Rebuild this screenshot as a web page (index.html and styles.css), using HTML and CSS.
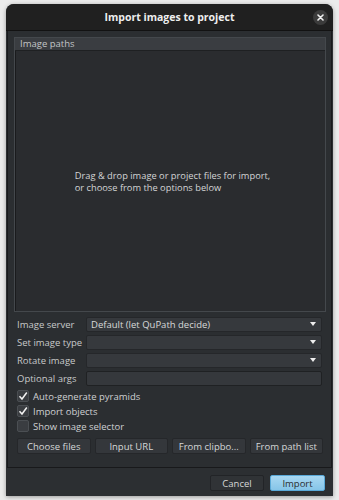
FILE: index.html
```html
<!DOCTYPE html>
<html>
<head>
<meta charset="utf-8">
<link rel="stylesheet" href="styles.css">
</head>
<body>
<div class="window">
  <div class="titlebar">
    <span class="title">Import images to project</span>
    <span class="close">
      <svg width="7" height="7" viewBox="0 0 7 7"><path d="M1 1 L6 6 M6 1 L1 6" stroke="#f0f0f0" stroke-width="1.6" stroke-linecap="round"/></svg>
    </span>
  </div>
  <div class="pane">
    <div class="list">
      <div class="list-header">Image paths</div>
      <div class="list-body">
        <p class="placeholder">Drag &amp; drop image or project files for import,<br>or choose from the options below</p>
      </div>
    </div>
    <div class="form">
      <div class="row">
        <span class="label">Image server</span>
        <div class="combo"><span>Default (let QuPath decide)</span><i class="arrow"></i></div>
      </div>
      <div class="row">
        <span class="label">Set image type</span>
        <div class="combo"><span></span><i class="arrow"></i></div>
      </div>
      <div class="row">
        <span class="label">Rotate image</span>
        <div class="combo"><span></span><i class="arrow"></i></div>
      </div>
      <div class="row">
        <span class="label">Optional args</span>
        <div class="field"></div>
      </div>
      <div class="checks">
        <label class="check"><span class="box on"><svg width="10" height="10" viewBox="0 0 10 10"><path d="M1.5 5.2 L4 8 L8.8 1.5" fill="none" stroke="#f2f2f2" stroke-width="1.5"/></svg></span>Auto-generate pyramids</label>
        <label class="check"><span class="box on"><svg width="10" height="10" viewBox="0 0 10 10"><path d="M1.5 5.2 L4 8 L8.8 1.5" fill="none" stroke="#f2f2f2" stroke-width="1.5"/></svg></span>Import objects</label>
        <label class="check"><span class="box"></span>Show image selector</label>
      </div>
      <div class="buttons">
        <button class="btn">Choose files</button>
        <button class="btn">Input URL</button>
        <button class="btn">From clipbo...</button>
        <button class="btn">From path list</button>
      </div>
    </div>
  </div>
  <div class="footer">
    <button class="btn cancel">Cancel</button>
    <button class="btn primary">Import</button>
  </div>
</div>
</body>
</html>
```

FILE: styles.css
```css
html, body {
  margin: 0;
  padding: 0;
  background: #ebebeb;
}
body {
  width: 339px;
  height: 500px;
  overflow: hidden;
  font-family: "Open Sans", "DejaVu Sans", sans-serif;
  font-size: 9.5px;
  color: #cfd0d1;
}
.window {
  margin: 4px 6px 0 6px;
  width: 327px;
  height: 492px;
  background: #2c2f32;
  border-radius: 8px 8px 0 0;
  box-shadow: 0 1px 4px rgba(0,0,0,0.35);
  display: flex;
  flex-direction: column;
  overflow: hidden;
}
.titlebar {
  height: 26px;
  flex: none;
  background: #202020;
  border-bottom: 1px solid #121212;
  display: flex;
  align-items: center;
  justify-content: center;
  position: relative;
}
.title {
  color: #eeeeee;
  font-weight: bold;
  font-size: 10.5px;
}
.close {
  position: absolute;
  right: 5px;
  top: 6px;
  width: 15px;
  height: 15px;
  border-radius: 50%;
  background: #3b3b3b;
  display: flex;
  align-items: center;
  justify-content: center;
}
.pane {
  flex: none;
  height: 430px;
  margin: 0 1px;
  border: 1px solid #18191b;
  border-top: none;
  background: #2b2e31;
  padding: 6px 5px 0 6px;
  display: flex;
  flex-direction: column;
}
.list {
  height: 273px;
  border: 1px solid #44484c;
  display: flex;
  flex-direction: column;
}
.list-header {
  height: 12px;
  line-height: 12px;
  background: #3a3d41;
  border-bottom: 1px solid #1e2022;
  padding-left: 5px;
  color: #c3c5c7;
  font-size: 9.5px;
}
.list-body {
  flex: 1;
  background: #2a2c2f;
  border-left: 1px solid #1a1b1d;
  display: flex;
  align-items: center;
  justify-content: center;
}
.placeholder {
  margin: 0;
  color: #d4d5d6;
  font-size: 9.3px;
  line-height: 12px;
  text-align: left;
  margin-top: 1px;
  margin-left: 4px;
}
.form {
  padding: 5px 4px 0 3px;
  display: flex;
  flex-direction: column;
}
.row {
  display: flex;
  align-items: center;
  height: 14px;
  margin-bottom: 4px;
}
.label {
  width: 69px;
  flex: none;
  color: #c8c9ca;
}
.combo {
  flex: 1;
  height: 13px;
  background: #36393d;
  border: 1px solid #25272a;
  border-radius: 2px;
  display: flex;
  align-items: center;
  justify-content: space-between;
  padding: 0 4px;
  color: #d8d9da;
}
.arrow {
  width: 0;
  height: 0;
  border-left: 3.5px solid transparent;
  border-right: 3.5px solid transparent;
  border-top: 4px solid #eeeeee;
  margin-right: 1px;
}
.field {
  flex: 1;
  height: 13px;
  background: #35383c;
  border: 1px solid #1f2123;
  border-radius: 2px;
}
.checks {
  display: flex;
  flex-direction: column;
  gap: 3px;
  margin-top: 1px;
}
.check {
  display: flex;
  align-items: center;
  height: 12px;
  color: #cfd0d1;
}
.box {
  width: 10px;
  height: 10px;
  background: #3a3d41;
  border: 1px solid #4b4f53;
  border-radius: 2px;
  margin-right: 4px;
  display: flex;
  align-items: center;
  justify-content: center;
}
.buttons {
  display: flex;
  gap: 4px;
  margin-top: 6px;
  margin-right: -1px;
}
.btn {
  font-family: "Open Sans", "DejaVu Sans", sans-serif;
  font-size: 9.5px;
  color: #d6d7d8;
  background: #34373b;
  border: 1px solid #25272a;
  border-radius: 2px;
  height: 16px;
  padding: 0;
  line-height: 13px;
}
.buttons .btn {
  flex: 1;
}
.footer {
  flex: 1;
  display: flex;
  justify-content: flex-end;
  align-items: flex-start;
  gap: 6px;
  padding: 7px 8px 0 0;
  background: #2c2f32;
}
.cancel {
  width: 54px;
  background: #303336;
  border-color: #222427;
}
.primary {
  width: 55px;
  background: linear-gradient(#a9d8f2, #86c5e8);
  border: 1px solid #5aa9d8;
  color: #2a2d30;
}
```
